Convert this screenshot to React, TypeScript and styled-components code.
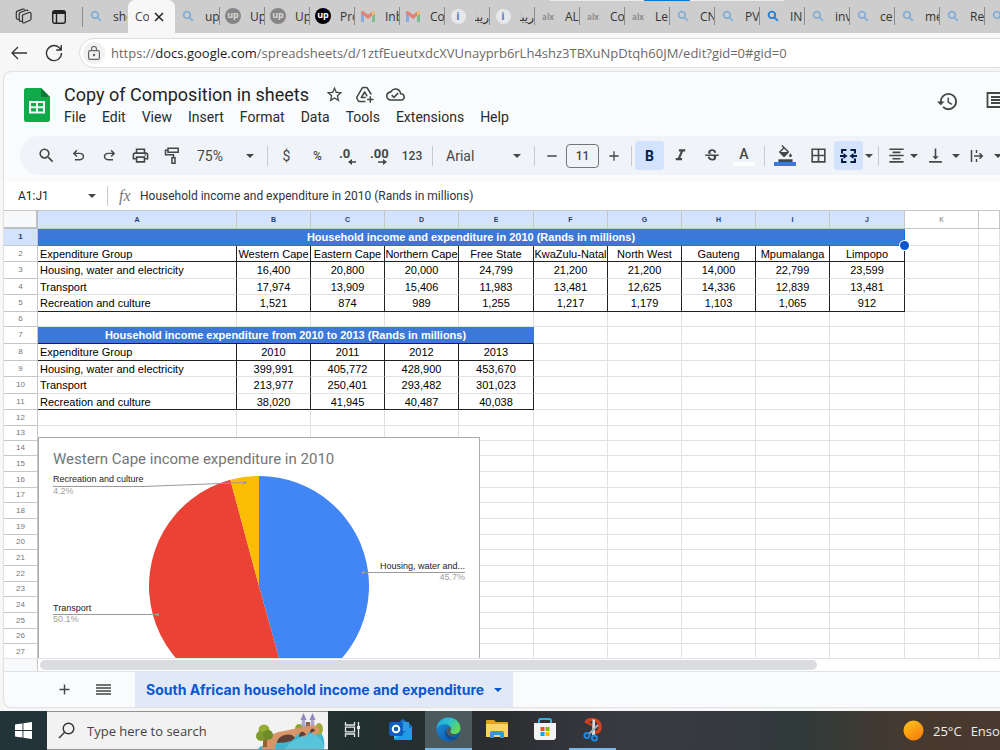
import React from "react";
import styled, { createGlobalStyle, css } from "styled-components";
import {
  MdSearch, MdOutlinePrint, MdStarBorder, MdOutlineCloudDone, MdHistory,
  MdFormatItalic, MdStrikethroughS, MdFormatColorFill, MdBorderAll, MdFormatAlignCenter,
  MdVerticalAlignBottom, MdAdd, MdRemove,
} from "react-icons/md";

const ui = `Roboto, "Liberation Sans", sans-serif`;
const system = `"Open Sans", "Noto Sans", "DejaVu Sans", sans-serif`;
const sheetFont = `"Liberation Sans", Arial, sans-serif`;

const GlobalStyle = createGlobalStyle`
  *, *::before, *::after { box-sizing: border-box; }
  body { margin: 0; background: #f7f7f7; overflow: hidden; }
  button, input, select { font: inherit; color: inherit; border: 0; background: none; padding: 0; margin: 0; outline: none; }
  svg { display: block; flex: none; }
`;

/* ---------- shell ---------- */

const Shell = styled.div`
  display: flex;
  flex-direction: column;
  height: 100vh;
  font-family: ${ui};
  color: #1f1f1f;
`;

/* ---------- browser tab strip ---------- */

const TabStrip = styled.nav`
  position: relative;
  display: flex;
  flex: none;
  height: 33px;
  background: #cdcdcd;
  font-family: ${system};
  font-size: 12px;
  overflow: hidden;
`;

const StripTools = styled.div`
  display: flex;
  align-items: center;
  gap: 19px;
  width: 83px;
  flex: none;
  padding-left: 15px;
  border-right: 1px solid transparent;
`;

const StripButton = styled.button`
  display: flex;
  color: #333;
`;

const BrowserTab = styled.a<{ $divider?: boolean }>`
  display: flex;
  align-items: center;
  flex: none;
  width: 45px;
  height: 18px;
  margin-top: 7px;
  padding-left: 5px;
  gap: 9px;
  color: #333;
  text-decoration: none;
  border-right: 1px solid ${(p) => (p.$divider ? "#8c8c8c" : "transparent")};
`;

const TabIcon = styled.span`
  display: flex;
  justify-content: center;
  flex: none;
  width: 16px;
`;

const TabLabel = styled.span`
  width: 14px;
  overflow: hidden;
  white-space: nowrap;
`;

const ActiveTab = styled.div`
  display: flex;
  align-items: center;
  gap: 5px;
  flex: none;
  width: 47px;
  padding-left: 7px;
  color: #444;
  background: #f7f7f7;
  border-radius: 7px 7px 0 0;
`;

const FirstDivider = styled.span`
  flex: none;
  width: 1px;
  height: 20px;
  margin: 7px 0 0 -1px;
  background: #8c8c8c;
`;

const LoadStrip = styled.div`
  position: absolute;
  top: 0;
  left: 55%;
  display: flex;
  width: 234px;
  height: 1px;
  background: #ececec;

  &::before {
    content: "";
    width: 46px;
    margin-left: 94px;
    background: #0a78d6;
  }
`;

const UpBadge = styled.span<{ $dark?: boolean }>`
  width: 16px;
  height: 16px;
  flex: none;
  border-radius: 50%;
  background: ${(p) => (p.$dark ? "#000" : "#858585")};
  color: ${(p) => (p.$dark ? "#fff" : "#d8d8d8")};
  font-size: 9px;
  font-weight: 700;
  line-height: 14px;
  text-align: center;
`;

const InfoBadge = styled.span`
  width: 15px;
  height: 15px;
  flex: none;
  border-radius: 50%;
  background: #e6e8ec;
  color: #5b7fb8;
  font-size: 11px;
  font-weight: 700;
  line-height: 14px;
  text-align: center;
`;

const AlxMark = styled.span`
  font-size: 8px;
  font-weight: 700;
  color: #8f8f8f;
`;

/* ---------- address bar ---------- */

const AddressBar = styled.div`
  display: flex;
  align-items: center;
  flex: none;
  height: 39px;
  padding: 0 0 0 11px;
  background: #f7f7f7;
`;

const NavButton = styled.button`
  display: flex;
  align-items: center;
  width: 34px;
  color: #333;
`;

const Omnibox = styled.div`
  display: flex;
  align-items: center;
  flex: 1;
  height: 30px;
  gap: 6px;
  padding-left: 3px;
  margin-right: -20px;
  background: #fff;
  border: 1px solid #dcdcdc;
  border-radius: 15px;
  font-family: ${system};
  font-size: 13px;
  color: #6a6a6a;
  white-space: nowrap;
`;

const LockBadge = styled.button`
  display: flex;
  align-items: center;
  justify-content: center;
  width: 22px;
  height: 22px;
  border-radius: 50%;
  background: #f1f1f1;
`;

const Url = styled.a`
  color: inherit;
  text-decoration: none;

  b {
    font-weight: 400;
    color: #1b1b1b;
  }
`;

/* ---------- spreadsheet app ---------- */

const AppPane = styled.main`
  display: flex;
  flex-direction: column;
  flex: 1;
  min-height: 0;
  margin: 0 0 4px 4px;
  background: #f9fbfd;
  border-radius: 7px 0 0 7px;
  box-shadow: 0 0 2px rgba(0, 0, 0, 0.3);
  overflow: hidden;
`;

const Header = styled.header`
  display: flex;
  flex: none;
  height: 64px;
  padding: 12px 0 0 20px;
`;

const LogoLink = styled.a`
  margin-top: 4px;
`;

const HeaderText = styled.div`
  display: flex;
  flex-direction: column;
  flex: 1;
  padding-left: 14px;
`;

const TitleRow = styled.div`
  display: flex;
  align-items: center;
  gap: 12px;
  height: 21px;
`;

const Title = styled.h1`
  margin: 0 4px 0 0;
  font-size: 18px;
  font-weight: 400;
  line-height: 21px;
`;

const IconButton = styled.button`
  display: flex;
  align-items: center;
  justify-content: center;
  color: #444746;
`;

const MenuBar = styled.nav`
  display: flex;
  gap: 16px;
  font-size: 14px;
  line-height: 24px;
`;

const MenuButton = styled.button`
  color: #2b2b2b;
`;

const HeaderActions = styled.div`
  display: flex;
  align-items: center;
  gap: 27px;
  height: 34px;
  margin-right: -8px;
`;

const Toolbar = styled.div`
  display: flex;
  align-items: center;
  flex: none;
  height: 39px;
  margin: 0 -20px 7px 16px;
  padding-left: 9px;
  background: #f0f4f9;
  border-radius: 20px;
  color: #444746;
  font-size: 14px;
`;

const Tool = styled.button<{ $w?: number; $on?: boolean; $small?: boolean }>`
  display: flex;
  align-items: center;
  justify-content: center;
  flex: none;
  width: ${(p) => p.$w ?? 31}px;
  height: 29px;
  ${(p) => p.$small && css`font-size: 12px; font-weight: 500;`}
  ${(p) => p.$on && css`background: #d3e3fd; color: #041e49; border-radius: 3px;`}
`;

const Stack = styled.span`
  display: flex;
  flex-direction: column;
  align-items: center;
  font-weight: 500;
  line-height: 16px;
`;

const ColorBar = styled.span<{ $color: string }>`
  width: 22px;
  height: 4px;
  background: ${(p) => p.$color};
`;

const Rule = styled.span`
  flex: none;
  width: 1px;
  height: 20px;
  margin: 0 3px;
  background: #c7cbd1;
`;

const SelectBox = styled.label<{ $w: number }>`
  display: grid;
  align-items: center;
  flex: none;
  width: ${(p) => p.$w}px;

  > * {
    grid-area: 1 / 1;
  }

  > svg {
    justify-self: end;
    margin-right: 10px;
    pointer-events: none;
  }
`;

const Select = styled.select`
  appearance: none;
  width: 100%;
  height: 28px;
  padding-left: 10px;
`;

const SizeInput = styled.input`
  flex: none;
  width: 33px;
  height: 24px;
  border: 1px solid #747775;
  border-radius: 4px;
  text-align: center;
  font-weight: 500;
  font-size: 12px;
`;

const FormulaBar = styled.div`
  display: flex;
  align-items: center;
  flex: none;
  height: 28px;
  padding-left: 14px;
  background: #fff;
  font-size: 12px;
`;

const NameInput = styled.input`
  width: 70px;
`;

const NameBox = styled(SelectBox)`
  > svg {
    margin-right: 8px;
  }
`;

const Fx = styled.span`
  width: 21px;
  margin-left: 8px;
  color: #777;
  font-family: "Liberation Serif", serif;
  font-size: 16px;
  font-style: italic;
`;

const FormulaInput = styled.input`
  flex: 1;
  color: #333;
`;

/* ---------- grid ---------- */

const GridArea = styled.section`
  position: relative;
  flex: 1;
  min-height: 0;
  overflow: hidden;
  background: #fff;
`;

const SheetTable = styled.table`
  width: 100%;
  table-layout: fixed;
  border-collapse: separate;
  border-spacing: 0;
  font-family: ${sheetFont};
  font-size: 11px;
  line-height: 14px;
  color: #000;
`;

const Col = styled.col<{ $w?: number }>`
  width: ${(p) => (p.$w ? `${p.$w}px` : "auto")};
`;

const Row = styled.tr<{ $h: number }>`
  height: ${(p) => p.$h}px;
`;

const Corner = styled.td`
  padding: 0;
  background: #f8f9fa;
  border-top: 1px solid #c4c7c5;
  border-right: 2px solid #bcbfc1;
  border-bottom: 2px solid #bcbfc1;
`;

const ColHead = styled.th<{ $on: boolean }>`
  padding: 0;
  font-size: 7px;
  font-weight: ${(p) => (p.$on ? 700 : 400)};
  color: ${(p) => (p.$on ? "#1f3c70" : "#777")};
  background: ${(p) => (p.$on ? "#d3e3fd" : "#fff")};
  border: solid #c4c7c5;
  border-width: 1px 1px 1px 0;
`;

const RowHead = styled.th<{ $on: boolean }>`
  padding: 0;
  font-size: 8px;
  line-height: 12px;
  font-weight: ${(p) => (p.$on ? 700 : 400)};
  color: ${(p) => (p.$on ? "#1f3c70" : "#777")};
  background: ${(p) => (p.$on ? "#d3e3fd" : "#fff")};
  border: solid #c4c7c5;
  border-width: 0 1px 1px 0;
`;

const Cell = styled.td<{ $first?: boolean; $boxed?: boolean; $under?: boolean }>`
  padding: 0 0 0 ${(p) => (p.$first ? 2 : 0)}px;
  text-align: ${(p) => (p.$first ? "left" : "center")};
  white-space: nowrap;
  overflow: hidden;
  border: solid #e1e1e1;
  border-width: 0 1px 1px 0;
  ${(p) => p.$boxed && css`border-right-color: #222;`}
  ${(p) => p.$under && css`border-bottom-color: #222;`}
`;

const Banner = styled.td<{ $selected?: boolean }>`
  position: relative;
  padding: 0;
  text-align: center;
  font-weight: 700;
  color: #fff;
  background: #3c78d8;
  border: solid ${(p) => (p.$selected ? "#1a73e8" : "#3c78d8")};
  border-width: 0 1px 1px 0;
  ${(p) => !p.$selected && css`border-bottom-color: #222;`}
`;

const FillHandle = styled.span`
  position: absolute;
  right: -5px;
  bottom: -5px;
  width: 9px;
  height: 9px;
  border-radius: 50%;
  background: #0b57d0;
  box-shadow: 0 0 0 1px #fff;
`;

const ChartCard = styled.figure`
  position: absolute;
  left: 34px;
  top: 227px;
  margin: 0;
  width: 442px;
  background: #fff;
  border: 1px solid #a9abad;
`;

const ScrollRow = styled.div`
  display: flex;
  flex: none;
  height: 13px;
  background: #fff;
  border-top: 1px solid #e1e3e6;
`;

const ScrollCorner = styled.span`
  width: 34px;
  border-right: 1px solid #c4c7c5;
  background: #f8f9fa;
`;

const ScrollThumb = styled.span`
  width: 78%;
  height: 10px;
  margin: 1px 0 0 2px;
  border-radius: 5px;
  background: #dadce0;
`;

const SheetBar = styled.footer`
  display: flex;
  align-items: center;
  flex: none;
  height: 36px;
  padding-left: 50px;
  border-top: 1px solid #dfe1e5;
  color: #444746;
`;

const SheetBarButton = styled(IconButton)`
  width: 20px;
  margin-right: 19px;
`;

const SheetTab = styled.button`
  display: flex;
  align-items: center;
  gap: 10px;
  height: 35px;
  margin-left: 3px;
  padding: 0 11px;
  background: #e1e9f7;
  color: #0b57d0;
  font-family: Inter, ${ui};
  font-size: 14px;
  font-weight: 700;
  white-space: nowrap;
`;

/* ---------- taskbar ---------- */

const Taskbar = styled.footer`
  display: flex;
  flex: none;
  height: 39px;
  background: linear-gradient(90deg, #22333a 0%, #23302f 38%, #2c2d31 50%, #393a41 62%, #35393f 73%, #2f3a3a 80%, #3f3a33 87%, #48392f 93%, #493a31 100%);
  font-family: ${system};
  font-size: 13px;
`;

const StartButton = styled.button`
  display: flex;
  align-items: center;
  justify-content: center;
  width: 47px;
`;

const SearchField = styled.label`
  display: flex;
  align-items: center;
  gap: 12px;
  width: 281px;
  margin-right: 1px;
  padding-left: 11px;
  overflow: hidden;
  background: #f2f2f2;
  border: solid #8f9395;
  border-width: 1px 0;
`;

const SearchInput = styled.input`
  width: 156px;
  color: #444;

  &::placeholder {
    color: #444;
    opacity: 1;
  }
`;

const TaskButton = styled.button<{ $active?: boolean; $open?: boolean }>`
  display: flex;
  align-items: center;
  justify-content: center;
  width: 47px;
  margin-right: 1px;
  border-bottom: 2px solid ${(p) => (p.$open ? "#76b9ed" : "transparent")};
  background: ${(p) => (p.$active ? "#4c5a5d" : "none")} padding-box;
`;

const Weather = styled.button`
  display: flex;
  align-items: center;
  gap: 9px;
  margin-left: auto;
  width: 97px;
  overflow: hidden;
  white-space: nowrap;
  color: #f0f0f0;
`;

/* ---------- icons ---------- */

const Caret = ({ color = "#444746" }: { color?: string }) => (
  <svg width="8" height="4" viewBox="0 0 8 4"><path d="M0 0h8L4 4z" fill={color} /></svg>
);

const SearchGlyph = ({ strong }: { strong?: boolean }) => (
  <svg width="12" height="12" viewBox="0 0 12 12" fill="none" stroke={strong ? "#1f7fd6" : "#84aed6"} strokeWidth="1.8">
    <circle cx="4.9" cy="4.9" r="3.3" /><path d="M7.3 7.3l3.6 3.6" />
  </svg>
);

const GmailGlyph = () => (
  <svg width="14" height="11" viewBox="0 0 14 11" opacity="0.75">
    <path d="M0 1.5V11h3V4.5z" fill="#6f9fe8" /><path d="M14 1.5V11h-3V4.5z" fill="#5fb97a" />
    <path d="M0 1.5C0 .2 1.6-.4 2.6.4L7 3.8 11.4.4C12.4-.4 14 .2 14 1.5v1L7 8 0 2.5z" fill="#e8695f" />
    <path d="M11 .8l.6-.5C12.6-.3 14 .3 14 1.5v1L11 4.9z" fill="#f3c14b" />
  </svg>
);

const DriveAddIcon = () => (
  <svg width="18" height="18" viewBox="0 0 18 18" fill="none" stroke="currentColor" strokeWidth="1.5" strokeLinejoin="round">
    <path d="M9.500 15.500H3.600a1.600 1.600 0 0 1-1.400-.8L1 12.500a1.600 1.600 0 0 1 0-1.600L6 2.300a1.600 1.600 0 0 1 1.400-.8h2.700a1.600 1.600 0 0 1 1.400.8l3.700 6.200" />
    <path d="M9.800 11.500H5.300L8.600 6l2.600 4.300" />
    <path d="M14.300 10.300v6.400M11.100 13.500h6.400" />
  </svg>
);

const UndoIcon = () => (
  <svg width="17" height="17" viewBox="0 -960 960 960" fill="currentColor"><path d="M280-200v-80h284q63 0 109.500-40T720-420q0-60-46.500-100T564-560H312l104 104-56 56-200-200 200-200 56 56-104 104h252q97 0 169.500 63T800-420q0 94-72.500 157T564-200H280Z" /></svg>
);
const RedoIcon = () => (
  <svg width="17" height="17" viewBox="0 -960 960 960" fill="currentColor"><path d="M396-200q-97 0-169.500-63T154-420q0-94 72.500-157T396-640h252L544-744l56-56 200 200-200 200-56-56 104-104H396q-63 0-109.500 40T240-420q0 60 46.500 100T396-280h284v80H396Z" /></svg>
);
const PaintIcon = () => (
  <svg width="16" height="18" viewBox="0 0 16 18" fill="none" stroke="currentColor" strokeWidth="1.5">
    <path d="M4 1.300h10.200v3.900H4zM4 3.200H1.500v4.600h8v3M8 10.800h3v5.400H8z" />
  </svg>
);
const MergeIcon = () => (
  <svg width="17" height="16" viewBox="0 0 17 16" fill="none" stroke="currentColor" strokeWidth="2">
    <path d="M6.500 2H2v3.500M2 10.500V14h4.500M10.500 2H15v3.500M15 10.500V14h-4.500" />
    <path d="M0 8h4M17 8h-4" /><path d="M3.500 5l4 3-4 3zM13.500 5l-4 3 4 3z" fill="currentColor" stroke="none" />
  </svg>
);
const WrapIcon = () => (
  <svg width="14" height="14" viewBox="0 0 14 14" fill="none" stroke="currentColor" strokeWidth="1.500">
    <path d="M1.500 1v12M6.500 1v3M6.500 10v3M4 7h8M9.500 4.200L12.300 7 9.500 9.800" />
  </svg>
);
const DecimalIcon = ({ digits, right }: { digits: string; right?: boolean }) => (
  <svg width="22" height="18" viewBox="0 0 22 18" fill="currentColor">
    <text x="1" y="11" fontSize="13" fontWeight="700" fontFamily={ui}>{digits}</text>
    {right
      ? <path d="M9 14.300h5v-2.300l4 3-4 3v-2.300H9z" />
      : <path d="M18 14.300h-4v-2.300l-4 3 4 3v-2.300h4z" />}
  </svg>
);
const CommentIcon = () => (
  <svg width="22" height="20" viewBox="0 0 22 20" fill="none" stroke="currentColor" strokeWidth="1.800">
    <path d="M1.500 2h19v17l-3.500-3H1.500zM5 6h12M5 9h12M5 12h12" />
  </svg>
);
const SheetsLogo = () => (
  <svg width="26" height="34" viewBox="0 0 26 34">
    <path d="M2.500 0H17l9 9v22.500a2.500 2.500 0 0 1-2.500 2.500h-21A2.500 2.500 0 0 1 0 31.500v-29A2.500 2.500 0 0 1 2.500 0z" fill="#0fab4b" />
    <path d="M17 0l9 9h-9z" fill="#0a7a36" />
    <path d="M5 13h16v12.500H5z" fill="#f1fbf4" />
    <path d="M7 15h5v3.200H7zM14 15h5v3.200h-5zM7 20.300h5v3.200H7zM14 20.300h5v3.200h-5z" fill="#0fab4b" />
  </svg>
);

const BridgeArt = () => (
  <svg width="76" height="37" viewBox="0 0 76 37">
    <path d="M3 37c4-6 16-4 20-12l38-8c8 4 9 12 8 20z" fill="#3fb3cf" />
    <path d="M30 37c6-10 18-12 28-16 8 4 11 10 11 16z" fill="#58c4db" />
    <path d="M46 17l1-9 1.500-6L50 8l1 9zM55 17l1-9 1.500-6L59 8l1 9z" fill="#aaa6cf" />
    <path d="M45.500 8l3-7 3 7zM54.500 8l3-7 3 7z" fill="#8d8abf" />
    <ellipse cx="44" cy="17" rx="4" ry="5" fill="#8aa638" /><ellipse cx="64" cy="17" rx="4" ry="6" fill="#a3a83a" />
    <path d="M51 10h4v7h-4z" fill="#8c6353" />
    <path d="M7 37c1-10 11-17 22-18l29-6 6 3v5l-5 2c-4-5-6-4-7 1l-4 1c-3-5-6-4-8 1-6-4-16-3-18 4-2 3-2 5-2 7z" fill="#d9956a" />
    <path d="M22 31c1-9 15-11 18-5l-4 3c-4 1-9 2-14 2zM44 25c0-6 5-7 7-2zM55 21c0-5 4-6 5-2z" fill="#5e4034" />
    <path d="M8 27h4v8H8z" fill="#8d6735" />
    <circle cx="9" cy="18" r="5.500" fill="#93ad35" /><circle cx="6" cy="24" r="5" fill="#7d9a2c" /><circle cx="13" cy="23" r="5" fill="#6d8c27" />
  </svg>
);

const OutlookIcon = () => (
  <svg width="24" height="23" viewBox="0 0 24 23">
    <path d="M5 8L14 1l9 7v9H5z" fill="#1a6fc4" /><path d="M9 4h11v9H9z" fill="#2f9be6" />
    <path d="M5 10l10 6 8-7v11a2 2 0 0 1-2 2H7a2 2 0 0 1-2-2z" fill="#35c3f3" /><path d="M5 21l18-11v10a2 2 0 0 1-2 2H7z" fill="#1e9fe5" />
    <rect x="0" y="4" width="14" height="14" rx="2" fill="#0f5fc0" />
    <circle cx="7" cy="11" r="3.300" fill="none" stroke="#fff" strokeWidth="2" />
  </svg>
);
const EdgeIcon = () => (
  <svg width="25" height="25" viewBox="0 0 24 24">
    <defs>
      <linearGradient id="edgeTop" x1="0" y1="0" x2="1" y2="0.600"><stop offset="0" stopColor="#1fa4e4" /><stop offset="0.500" stopColor="#2dc2cd" /><stop offset="1" stopColor="#66d84e" /></linearGradient>
      <linearGradient id="edgeLow" x1="0" y1="0" x2="1" y2="1"><stop offset="0" stopColor="#1c92de" /><stop offset="1" stopColor="#0c4d9d" /></linearGradient>
    </defs>
    <circle cx="12" cy="12" r="11.500" fill="url(#edgeLow)" />
    <path d="M.6 11C1.200 5 6 .5 12 .5c7 0 11.500 5 11.500 10.300 0 3.500-2.600 5.700-5.700 5.700-2.600 0-4.300-1-4.300-2 0-.7 1-1.200 1-3 0-2.500-2.500-4.500-6-4.500C5 7 2 8.500.6 11z" fill="url(#edgeTop)" />
    <path d="M9 11.500c-2 5 1.500 10.500 7.500 10.500 2 0 4-1 5.300-3-6 2.500-12.300-1-12.800-7.500z" fill="#0f4a92" />
    <path d="M14.400 10.700c.5 1.700-.9 3-.9 3.800 0 1.200 2 2 4.300 2 1 0 1.600-.1 2.200-.4-1.500 1.900-3.300 2.400-5 2.400-4 0-5.500-3-5-5.500.5-2 2.500-3.500 4.400-2.300z" fill="#4c5a5d" />
  </svg>
);
const ExplorerIcon = () => (
  <svg width="22" height="19" viewBox="0 0 22 19">
    <path d="M0 1a1 1 0 0 1 1-1h7l2 2h11a1 1 0 0 1 1 1v14H0z" fill="#e3a21a" /><path d="M0 4h22v13H0z" fill="#fcd462" />
    <path d="M4 18v-5a2 2 0 0 1 2-2h10a2 2 0 0 1 2 2v5h-4v-3H8v3z" fill="#3d93dc" />
  </svg>
);
const StoreIcon = () => (
  <svg width="24" height="23" viewBox="0 0 24 23">
    <path d="M6 6V2.500A1.500 1.500 0 0 1 7.500 1h9A1.500 1.500 0 0 1 18 2.500V6" fill="none" stroke="#2fb2e8" strokeWidth="2" />
    <path d="M1 5h22v14a3 3 0 0 1-3 3H4a3 3 0 0 1-3-3z" fill="#f3f3f3" />
    <path d="M7.500 9h4v4h-4z" fill="#f25022" /><path d="M12.500 9h4v4h-4z" fill="#7fba00" />
    <path d="M7.500 14h4v4h-4z" fill="#00a4ef" /><path d="M12.500 14h4v4h-4z" fill="#ffb900" />
  </svg>
);
const SnipIcon = () => (
  <svg width="20" height="24" viewBox="0 0 20 24">
    <path d="M3 3.500C9-.5 17 2 17 9c0 3.500-2 5.500-5 5.500" fill="none" stroke="#d2401c" strokeWidth="3.500" />
    <path d="M2 3.500l8 4" stroke="#d2401c" strokeWidth="2" />
    <path d="M9.500 1L12 2v15H9z" fill="#d7dadd" /><path d="M15 7L6 16" stroke="#aab0b5" strokeWidth="2" />
    <circle cx="4" cy="17.500" r="2.500" fill="none" stroke="#1f8be0" strokeWidth="2" /><circle cx="11.500" cy="20" r="2.500" fill="none" stroke="#1f8be0" strokeWidth="2" />
  </svg>
);
const TaskViewIcon = () => (
  <svg width="17" height="17" viewBox="0 0 17 17" fill="none" stroke="#e6e8e8" strokeWidth="1.300">
    <path d="M1.500 1v3h9V1M1.500 16v-3h9v3M1.500 6.200h9v4.600h-9zM14.500 1v15" /><path d="M13 5h3v3h-3z" fill="#e6e8e8" stroke="none" />
  </svg>
);
const WindowsIcon = () => (
  <svg width="17" height="17" viewBox="0 0 17 17" fill="#fff"><path d="M0 2.400l7.500-1v6.700H0zM8.400 1.200L17 0v8.100H8.400zM0 8.900h7.500v6.700L0 14.600zM8.400 8.900H17V17l-8.600-1.200z" /></svg>
);
const SunIcon = () => (
  <svg width="21" height="21" viewBox="0 0 21 21">
    <defs><linearGradient id="sun" x1="0.200" y1="0" x2="0.800" y2="1"><stop offset="0" stopColor="#ffc21a" /><stop offset="1" stopColor="#f77a08" /></linearGradient></defs>
    <circle cx="10.500" cy="10.500" r="10" fill="url(#sun)" />
  </svg>
);

/* ---------- data ---------- */

type Favicon = "search" | "searchStrong" | "up" | "upDark" | "gmail" | "info" | "alx";

const favicons: Record<Favicon, React.ReactNode> = {
  search: <SearchGlyph />,
  searchStrong: <SearchGlyph strong />,
  up: <UpBadge>up</UpBadge>,
  upDark: <UpBadge $dark>up</UpBadge>,
  gmail: <GmailGlyph />,
  info: <InfoBadge>i</InfoBadge>,
  alx: <AlxMark>alx</AlxMark>,
};

const tabs: [Favicon, string][] = [
  ["search", "up"], ["up", "Up"], ["up", "Up"], ["upDark", "Pro"], ["gmail", "Inb"], ["gmail", "Co"],
  ["info", "ريبا"], ["info", "ريبا"], ["alx", "AL"], ["alx", "Co"], ["alx", "Le"], ["search", "CN"],
  ["search", "PV"], ["searchStrong", "IN"], ["search", "inv"], ["search", "ce"], ["search", "me"],
  ["search", "Re"], ["search", ""],
];

const menus = ["File", "Edit", "View", "Insert", "Format", "Data", "Tools", "Extensions", "Help"];

const columns: [string, number?][] = [
  ["A", 199], ["B", 74], ["C", 74], ["D", 74], ["E", 75], ["F", 74], ["G", 74], ["H", 74], ["I", 74], ["J", 75], ["K", 74], [""],
];

const rowHeights = [17, 16, 17, 16, 17, 15, 17, 17, 16, 17, 16, 16, 15, 15, 16, 16, 15, 16, 16, 15, 16, 16, 15, 16, 16, 15, 16];

const title2010 = "Household income and expenditure in 2010 (Rands in millions)";

const banners: Record<number, { text: string; span: number; selected?: boolean }> = {
  1: { text: title2010, span: 10, selected: true },
  7: { text: "Household income expenditure from 2010 to 2013 (Rands in millions)", span: 5 },
};

const values: Record<number, string[]> = {
  2: ["Expenditure Group", "Western Cape", "Eastern Cape", "Northern Cape", "Free State", "KwaZulu-Natal", "North West", "Gauteng", "Mpumalanga", "Limpopo"],
  3: ["Housing, water and electricity", "16,400", "20,800", "20,000", "24,799", "21,200", "21,200", "14,000", "22,799", "23,599"],
  4: ["Transport", "17,974", "13,909", "15,406", "11,983", "13,481", "12,625", "14,336", "12,839", "13,481"],
  5: ["Recreation and culture", "1,521", "874", "989", "1,255", "1,217", "1,179", "1,103", "1,065", "912"],
  8: ["Expenditure Group", "2010", "2011", "2012", "2013"],
  9: ["Housing, water and electricity", "399,991", "405,772", "428,900", "453,670"],
  10: ["Transport", "213,977", "250,401", "293,482", "301,023"],
  11: ["Recreation and culture", "38,020", "41,945", "40,487", "40,038"],
};

const underlined = [2, 5, 8, 11];

/* ---------- parts ---------- */

const CX = 220, CY = 148, R = 110;
const slice = (from: number, to: number) => {
  const at = (t: number) => `${CX + R * Math.sin(2 * Math.PI * t)} ${CY - R * Math.cos(2 * Math.PI * t)}`;
  return `M${CX} ${CY}L${at(from)}A${R} ${R} 0 ${to - from > 0.5 ? 1 : 0} 1 ${at(to)}Z`;
};

const PieChart = () => (
  <ChartCard>
    <svg width="440" height="270" viewBox="0 0 440 270" fontFamily={sheetFont} fontSize="9" role="img" aria-label="Western Cape income expenditure in 2010">
      <text x="14" y="26" fontFamily={ui} fontSize="15" fill="#757575">Western Cape income expenditure in 2010</text>
      <path d={slice(0, 0.457)} fill="#4285f4" />
      <path d={slice(0.457, 0.958)} fill="#ea4335" />
      <path d={slice(0.958, 1)} fill="#fbbc04" />
      <g fill="none" stroke="#9a9a9a">
        <path d="M14 48.500H105L206 44.500" /><path d="M324 134.500H426" /><path d="M14 176.500H118" />
      </g>
      <g fill="#9a9a9a"><circle cx="206" cy="44.500" r="1.500" /><circle cx="324" cy="134.500" r="1.500" /><circle cx="118.500" cy="176.500" r="1.500" /></g>
      <g fill="#222">
        <text x="14" y="44">Recreation and culture</text>
        <text x="426" y="131" textAnchor="end">Housing, water and...</text>
        <text x="14" y="173">Transport</text>
      </g>
      <g fill="#9e9e9e">
        <text x="14" y="56">4.2%</text>
        <text x="426" y="142" textAnchor="end">45.7%</text>
        <text x="14" y="184">50.1%</text>
      </g>
    </svg>
  </ChartCard>
);

const SheetRow = ({ n, height }: { n: number; height: number }) => {
  const banner = banners[n];
  const data = values[n] ?? [];
  const start = banner ? banner.span : 0;
  return (
    <Row $h={height}>
      <RowHead scope="row" $on={n === 1}>{n}</RowHead>
      {banner && (
        <Banner colSpan={banner.span} $selected={banner.selected}>
          {banner.text}
          {banner.selected && <FillHandle />}
        </Banner>
      )}
      {columns.slice(start).map((c, i) => (
        <Cell key={c[0]} $first={start + i === 0} $boxed={i < data.length} $under={i < data.length && underlined.includes(n)}>
          {data[i]}
        </Cell>
      ))}
    </Row>
  );
};

export default function App() {
  return (
    <Shell>
      <GlobalStyle />
      <TabStrip>
        <StripTools>
          <StripButton aria-label="Workspaces">
            <svg width="18" height="17" viewBox="0 0 18 17" fill="none" stroke="#333" strokeWidth="1.200" strokeLinejoin="round">
              <path d="M7.500 7l6.500-2.500q2-.6 2 1.200v5q0 1.200-1 1.600l-5.500 2.400q-2 .7-2-1z" /><path d="M7.500 13l-2 .3q-1.300 0-1.300-1.300V6q0-1 1-1.500l6-2.300q1.300-.4 2 .8M4.200 11.500l-1.400-.2q-1.500 0-1.500-1.500V4.500q0-1 1-1.400l5.500-2q1.300-.4 2 .6" />
            </svg>
          </StripButton>
          <StripButton aria-label="Tab actions">
            <svg width="14" height="14" viewBox="0 0 14 14" fill="none" stroke="#222" strokeWidth="1.400">
              <rect x="0.700" y="0.700" width="12.600" height="12.600" rx="2" /><path d="M1 2.500h12" strokeWidth="3" /><path d="M4.500 3v10" />
            </svg>
          </StripButton>
        </StripTools>
        <FirstDivider />
        <BrowserTab href="#"><TabIcon>{favicons.search}</TabIcon><TabLabel>she</TabLabel></BrowserTab>
        <ActiveTab>
          <TabLabel>Co</TabLabel>
          <StripButton aria-label="Close tab">
            <svg width="10" height="10" viewBox="0 0 10 10" stroke="#222" strokeWidth="1.500"><path d="M1 1l8 8M9 1L1 9" /></svg>
          </StripButton>
        </ActiveTab>
        {tabs.map(([icon, label], i) => (
          <BrowserTab key={i} href="#" $divider>
            <TabIcon>{favicons[icon]}</TabIcon>
            <TabLabel dir={icon === "info" ? "rtl" : "ltr"}>{label}</TabLabel>
          </BrowserTab>
        ))}
        <LoadStrip />
      </TabStrip>

      <AddressBar>
        <NavButton aria-label="Back">
          <svg width="17" height="14" viewBox="0 0 17 14" fill="none" stroke="#333" strokeWidth="1.300"><path d="M16 7H1M7 1L1 7l6 6" /></svg>
        </NavButton>
        <NavButton aria-label="Reload">
          <svg width="18" height="18" viewBox="0 0 18 18" fill="none" stroke="#333" strokeWidth="1.400"><path d="M16.500 9A7.500 7.500 0 1 1 14 3.500L16 5.500M16.200 1v5h-5" /></svg>
        </NavButton>
        <Omnibox>
          <LockBadge aria-label="Site information">
            <svg width="12" height="14" viewBox="0 0 12 14" fill="none" stroke="#666" strokeWidth="1.200"><rect x="0.600" y="4.600" width="10.800" height="8.800" rx="1.500" /><path d="M3.500 4.500V3a2.500 2.500 0 0 1 5 0v1.500" /><circle cx="6" cy="9" r="0.600" fill="#666" /></svg>
          </LockBadge>
          <Url href="#">https://<b>docs.google.com</b>/spreadsheets/d/1ztfEueutxdcXVUnayprb6rLh4shz3TBXuNpDtqh60JM/edit?gid=0#gid=0</Url>
        </Omnibox>
      </AddressBar>

      <AppPane>
        <Header>
          <LogoLink href="#" aria-label="Sheets home"><SheetsLogo /></LogoLink>
          <HeaderText>
            <TitleRow>
              <Title>Copy of Composition in sheets</Title>
              <IconButton aria-label="Star"><MdStarBorder size={19} /></IconButton>
              <IconButton aria-label="Add shortcut to Drive"><DriveAddIcon /></IconButton>
              <IconButton aria-label="Saved to Drive"><MdOutlineCloudDone size={19} /></IconButton>
            </TitleRow>
            <MenuBar>{menus.map((m) => <MenuButton key={m}>{m}</MenuButton>)}</MenuBar>
          </HeaderText>
          <HeaderActions>
            <IconButton aria-label="Version history"><MdHistory size={23} /></IconButton>
            <IconButton aria-label="Comments"><CommentIcon /></IconButton>
          </HeaderActions>
        </Header>

        <Toolbar>
          <Tool $w={34} aria-label="Search the menus"><MdSearch size={19} /></Tool>
          <Tool aria-label="Undo"><UndoIcon /></Tool>
          <Tool aria-label="Redo"><RedoIcon /></Tool>
          <Tool aria-label="Print"><MdOutlinePrint size={19} /></Tool>
          <Tool aria-label="Paint format"><PaintIcon /></Tool>
          <SelectBox $w={77}>
            <Select aria-label="Zoom" defaultValue="75%"><option>75%</option></Select>
            <Caret />
          </SelectBox>
          <Rule />
          <Tool aria-label="Format as currency">$</Tool>
          <Tool $small aria-label="Format as percent">%</Tool>
          <Tool aria-label="Decrease decimal places"><DecimalIcon digits=".0" /></Tool>
          <Tool aria-label="Increase decimal places"><DecimalIcon digits=".00" right /></Tool>
          <Tool $w={34} $small aria-label="More formats">123</Tool>
          <Rule />
          <SelectBox $w={95}>
            <Select aria-label="Font" defaultValue="Arial"><option>Arial</option></Select>
            <Caret />
          </SelectBox>
          <Rule />
          <Tool $w={28} aria-label="Decrease font size"><MdRemove size={16} /></Tool>
          <SizeInput aria-label="Font size" defaultValue="11" />
          <Tool $w={29} aria-label="Increase font size"><MdAdd size={16} /></Tool>
          <Rule />
          <Tool $w={29} $on aria-label="Bold"><b>B</b></Tool>
          <Tool $w={32} aria-label="Italic"><MdFormatItalic size={19} /></Tool>
          <Tool aria-label="Strikethrough"><MdStrikethroughS size={18} /></Tool>
          <Tool $w={34} aria-label="Text colour"><Stack>A<ColorBar $color="#fff" /></Stack></Tool>
          <Rule />
          <Tool $w={34} aria-label="Fill colour"><Stack><MdFormatColorFill size={17} /><ColorBar $color="#3c78d8" /></Stack></Tool>
          <Tool $w={32} aria-label="Borders"><MdBorderAll size={19} /></Tool>
          <Tool $w={29} $on aria-label="Merge cells"><MergeIcon /></Tool>
          <Tool $w={12} aria-label="Merge options"><Caret /></Tool>
          <Rule />
          <Tool $w={28} aria-label="Horizontal align"><MdFormatAlignCenter size={19} /></Tool>
          <Tool $w={8} aria-label="Horizontal align options"><Caret /></Tool>
          <Tool $w={34} aria-label="Vertical align"><MdVerticalAlignBottom size={19} /></Tool>
          <Tool $w={8} aria-label="Vertical align options"><Caret /></Tool>
          <Tool $w={34} aria-label="Text wrapping"><WrapIcon /></Tool>
          <Tool $w={8} aria-label="Text wrapping options"><Caret /></Tool>
        </Toolbar>

        <FormulaBar>
          <NameBox $w={86}>
            <NameInput aria-label="Name box" defaultValue="A1:J1" />
            <Caret />
          </NameBox>
          <Rule />
          <Fx>fx</Fx>
          <FormulaInput aria-label="Formula" defaultValue={title2010} />
        </FormulaBar>

        <GridArea>
          <SheetTable>
            <colgroup>
              <Col $w={34} />
              {columns.map(([name, w]) => <Col key={name} $w={w} />)}
            </colgroup>
            <thead>
              <Row $h={19}>
                <Corner />
                {columns.map(([name], i) => <ColHead key={name} scope="col" $on={i < 10}>{name}</ColHead>)}
              </Row>
            </thead>
            <tbody>
              {rowHeights.map((h, i) => <SheetRow key={i} n={i + 1} height={h} />)}
            </tbody>
          </SheetTable>
          <PieChart />
        </GridArea>

        <ScrollRow><ScrollCorner /><ScrollThumb /></ScrollRow>

        <SheetBar>
          <SheetBarButton aria-label="Add sheet"><MdAdd size={17} /></SheetBarButton>
          <SheetBarButton aria-label="All sheets">
            <svg width="15" height="11" viewBox="0 0 15 11" stroke="currentColor" strokeWidth="1.500"><path d="M0 1h15M0 4h15M0 7h15M0 10h15" /></svg>
          </SheetBarButton>
          <SheetTab>South African household income and expenditure<Caret color="#0b57d0" /></SheetTab>
        </SheetBar>
      </AppPane>

      <Taskbar>
        <StartButton aria-label="Start"><WindowsIcon /></StartButton>
        <SearchField>
          <svg width="17" height="17" viewBox="0 0 17 17" fill="none" stroke="#333" strokeWidth="1.400"><circle cx="10.500" cy="6.500" r="5.300" /><path d="M6.700 10.300L1 16" /></svg>
          <SearchInput aria-label="Search" placeholder="Type here to search" />
          <BridgeArt />
        </SearchField>
        <TaskButton aria-label="Task view"><TaskViewIcon /></TaskButton>
        <TaskButton aria-label="Outlook"><OutlookIcon /></TaskButton>
        <TaskButton $active $open aria-label="Edge"><EdgeIcon /></TaskButton>
        <TaskButton aria-label="File Explorer"><ExplorerIcon /></TaskButton>
        <TaskButton aria-label="Store"><StoreIcon /></TaskButton>
        <TaskButton $open aria-label="Snipping Tool"><SnipIcon /></TaskButton>
        <Weather><SunIcon /><span>25°C</span><span>Ensoleillé</span></Weather>
      </Taskbar>
    </Shell>
  );
}
